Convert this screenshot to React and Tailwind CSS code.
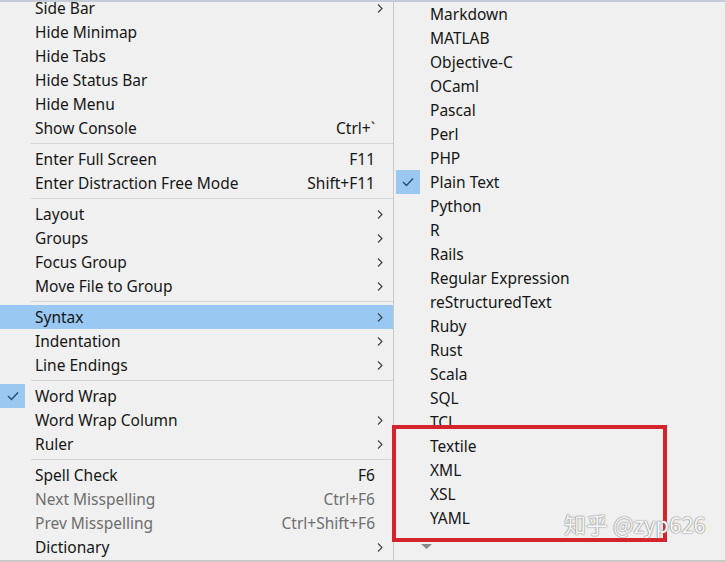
import React from "react";

const Chevron = () => (
  <svg width="6" height="9" viewBox="0 0 6 9" className="block">
    <polyline points="1,0.5 5,4.5 1,8.5" fill="none" stroke="#3c3c3c" strokeWidth="1.1" />
  </svg>
);

const Check = () => (
  <svg width="12" height="10" viewBox="0 0 12 10" className="block">
    <polyline points="1,5 4.5,8.5 11,1.5" fill="none" stroke="#1f4d7a" strokeWidth="1.4" />
  </svg>
);

const leftItems = [
  { t: "Side Bar", sub: true },
  { t: "Hide Minimap" },
  { t: "Hide Tabs" },
  { t: "Hide Status Bar" },
  { t: "Hide Menu" },
  { t: "Show Console", k: "Ctrl+`" },
  { sep: true },
  { t: "Enter Full Screen", k: "F11" },
  { t: "Enter Distraction Free Mode", k: "Shift+F11" },
  { sep: true },
  { t: "Layout", sub: true },
  { t: "Groups", sub: true },
  { t: "Focus Group", sub: true },
  { t: "Move File to Group", sub: true },
  { sep: true },
  { t: "Syntax", sub: true, hl: true },
  { t: "Indentation", sub: true },
  { t: "Line Endings", sub: true },
  { sep: true },
  { t: "Word Wrap", check: true },
  { t: "Word Wrap Column", sub: true },
  { t: "Ruler", sub: true },
  { sep: true },
  { t: "Spell Check", k: "F6" },
  { t: "Next Misspelling", k: "Ctrl+F6", dis: true },
  { t: "Prev Misspelling", k: "Ctrl+Shift+F6", dis: true },
  { t: "Dictionary", sub: true },
];

const rightItems = [
  "Markdown",
  "MATLAB",
  "Objective-C",
  "OCaml",
  "Pascal",
  "Perl",
  "PHP",
  "Plain Text",
  "Python",
  "R",
  "Rails",
  "Regular Expression",
  "reStructuredText",
  "Ruby",
  "Rust",
  "Scala",
  "SQL",
  "TCL",
  "Textile",
  "XML",
  "XSL",
  "YAML",
];

export default function App() {
  return (
    <div
      className="relative flex w-[725px] h-[562px] overflow-hidden bg-[#f0f0f0] border-t-2 border-t-[#c4ccd7] border-b-2 border-b-[#c9c9c9] text-[15.5px] text-[#161616]"
      style={{ fontFamily: '"Noto Sans", "Noto Sans CJK SC", sans-serif' }}
    >
      {/* left menu */}
      <div className="w-[394px] shrink-0 border-r border-r-[#c8c8c8] overflow-hidden">
        <div className="-mt-[6px] flex flex-col">
          {leftItems.map((it, i) =>
            it.sep ? (
              <div key={i} className="py-[3px] pl-[31px]">
                <div className="h-px bg-[#d6d6d6]" />
              </div>
            ) : (
              <div
                key={i}
                className={`flex items-center h-[24px] ${it.hl ? "bg-[#99c9f3]" : ""} ${
                  it.dis ? "text-[#6e6e6e]" : ""
                }`}
              >
                <div className="w-[35px] h-full shrink-0 flex">
                  {it.check && (
                    <div className="w-[25px] h-full bg-[#9ac8ef] flex items-center justify-center">
                      <Check />
                    </div>
                  )}
                </div>
                <div className="flex-1 leading-none whitespace-nowrap pt-[2px]">{it.t}</div>
                {it.k && <div className="leading-none whitespace-nowrap pr-[18px] pt-[2px]">{it.k}</div>}
                {it.sub && (
                  <div className="w-[18px] pl-[2px]">
                    <Chevron />
                  </div>
                )}
              </div>
            )
          )}
        </div>
      </div>

      {/* right menu */}
      <div className="flex-1 flex flex-col">
        {rightItems.map((t) => (
          <div key={t} className="flex items-center h-[24px]">
            <div className="w-[36px] h-full shrink-0 flex pl-[2px]">
              {t === "Plain Text" && (
                <div className="w-[24px] h-full bg-[#9ac8ef] flex items-center justify-center">
                  <Check />
                </div>
              )}
            </div>
            <div className="leading-none whitespace-nowrap pt-[2px]">{t}</div>
          </div>
        ))}
        <div className="h-[26px] pt-[14px] pl-[27px]">
          <svg width="11" height="5" viewBox="0 0 11 5" className="block">
            <polygon points="0,0 11,0 5.5,5" fill="#8a8a8a" />
          </svg>
        </div>
      </div>

      {/* annotation box */}
      <div className="absolute left-[392px] top-[423px] w-[275px] h-[117px] border-[4px] border-[#d5232b]" />

      {/* watermark */}
      <div
        className="absolute left-[564px] top-[510px] text-[22px] leading-none text-[#f6f6f6] whitespace-nowrap [text-shadow:0_0_1px_#6a6a6a,0_0_2px_#9a9a9a]"
        style={{ fontFamily: '"Noto Sans CJK SC", "Noto Sans", sans-serif' }}
      >
        知乎 @zyp626
      </div>
    </div>
  );
}
